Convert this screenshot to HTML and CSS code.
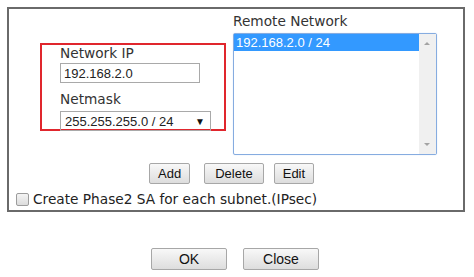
FILE: index.html
```html
<!DOCTYPE html>
<html lang="en">

<head>
    <meta charset="UTF-8">
    <title>Remote Network</title>
    <link rel="stylesheet" href="styles.css">
</head>

<body>
    <div class="panel">
        <div class="topRow">
            <div class="localBox">
                <div class="label">Network IP</div>
                <input type="text" class="ipInput" value="192.168.2.0">
                <div class="label mask">Netmask</div>
                <div class="maskSelect">
                    <span>255.255.255.0 / 24</span>
                    <span class="arrow">&#9660;</span>
                </div>
            </div>

            <div class="remote">
                <div class="label">Remote Network</div>
                <div class="listBox">
                    <div class="items">
                        <div class="item selected">192.168.2.0 / 24</div>
                    </div>
                    <div class="scroll">
                        <span class="up"></span>
                        <span class="down"></span>
                    </div>
                </div>
            </div>
        </div>

        <div class="btnRow">
            <button class="btn add">Add</button>
            <button class="btn del">Delete</button>
            <button class="btn">Edit</button>
        </div>

        <label class="checkRow">
            <span class="check"></span>
            <span>Create Phase2 SA for each subnet.(IPsec)</span>
        </label>
    </div>

    <div class="footer">
        <button class="btn big">OK</button>
        <button class="btn big">Close</button>
    </div>
</body>

</html>
```

FILE: styles.css
```css
body {
    margin: 0;
    padding: 7px 0 0 7px;
    background: #fff;
    font-family: "DejaVu Sans", Verdana, sans-serif;
    color: #333;
}

.panel {
    box-sizing: border-box;
    width: 458px;
    height: 205px;
    border: 2px solid #6a6a6a;
}

.topRow {
    display: flex;
}

.label {
    font-size: 13.7px;
    line-height: 16px;
    color: #333;
}

.localBox {
    box-sizing: border-box;
    width: 186px;
    height: 88px;
    margin: 34px 0 0 31px;
    padding: 0 0 0 18px;
    border: 2px solid #e0262d;
}

.ipInput {
    box-sizing: border-box;
    display: block;
    width: 140px;
    height: 20px;
    margin: 2px 0 0 0;
    padding: 0 3px;
    border: 1px solid #a9a9a9;
    font-family: "Liberation Sans", Arial, sans-serif;
    font-size: 13px;
    color: #222;
    outline: none;
}

.label.mask {
    margin-top: 8px;
}

.maskSelect {
    box-sizing: border-box;
    display: flex;
    justify-content: space-between;
    align-items: center;
    width: 151px;
    height: 20px;
    margin-top: 4px;
    padding: 0 5px 0 4px;
    border: 1px solid #a9a9a9;
    font-family: "Liberation Sans", Arial, sans-serif;
    font-size: 13px;
    color: #222;
}

.maskSelect .arrow {
    font-size: 10px;
    color: #111;
}

.remote {
    margin: 4px 0 0 7px;
}

.listBox {
    box-sizing: border-box;
    display: flex;
    width: 204px;
    height: 122px;
    margin-top: 4px;
    border: 1px solid #86ace0;
    border-radius: 2px;
    box-shadow: 0 0 1px #a9c6ee;
}

.items {
    flex: 1;
}

.item {
    height: 17px;
    padding-left: 2px;
    font-family: "Liberation Sans", Arial, sans-serif;
    font-size: 13px;
    line-height: 17px;
}

.item.selected {
    background: #3399ff;
    color: #fff;
}

.scroll {
    position: relative;
    width: 17px;
    background: #f0f0f0;
}

.scroll .up,
.scroll .down {
    position: absolute;
    left: 5px;
    width: 0;
    height: 0;
    border-left: 3px solid transparent;
    border-right: 3px solid transparent;
}

.scroll .up {
    top: 8px;
    border-bottom: 3px solid #a3a3a3;
}

.scroll .down {
    bottom: 8px;
    border-top: 3px solid #a3a3a3;
}

.btnRow {
    display: flex;
    gap: 10px;
    margin: 8px 0 0 140px;
}

.btn {
    box-sizing: border-box;
    height: 21px;
    padding: 0 8px;
    border: 1px solid #a7a7a7;
    border-radius: 2px;
    background: linear-gradient(#f8f8f8, #dddddd);
    font-family: "Liberation Sans", Arial, sans-serif;
    font-size: 13px;
    color: #111;
}

.btn.add {
    margin-right: 4px;
}

.btn.del {
    padding: 0 10px;
}

.checkRow {
    display: flex;
    align-items: center;
    gap: 4px;
    margin: 7px 0 0 7px;
    font-size: 13.7px;
    line-height: 17px;
    color: #222;
}

.check {
    box-sizing: border-box;
    width: 13px;
    height: 13px;
    border: 1px solid #9c9c9c;
    border-radius: 2px;
    background: linear-gradient(#f4f4f4, #dcdcdc);
}

.footer {
    display: flex;
    gap: 16px;
    margin: 36px 0 0 144px;
}

.btn.big {
    width: 76px;
    height: 22px;
    font-size: 14px;
}
```
